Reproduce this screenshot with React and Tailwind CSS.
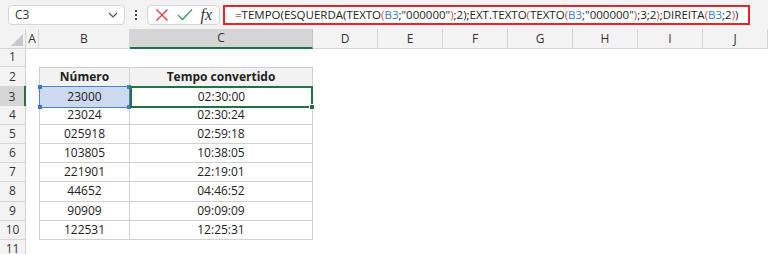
import React from 'react'

const COLS = ['A', 'B', 'C', 'D', 'E', 'F', 'G', 'H', 'I', 'J']

const DATA = [
  ['23000', '02:30:00'],
  ['23024', '02:30:24'],
  ['025918', '02:59:18'],
  ['103805', '10:38:05'],
  ['221901', '22:19:01'],
  ['44652', '04:46:52'],
  ['90909', '09:09:09'],
  ['122531', '12:25:31'],
]

const font = { fontFamily: '"Open Sans", "Noto Sans", sans-serif' }

function Formula() {
  const b = 'text-[#3a78c9]'
  const p = 'text-[#c0504d]'
  return (
    <span className="text-[11.5px] text-[#222] whitespace-nowrap">
      =TEMPO(ESQUERDA(TEXTO<span className={p}>(</span><span className={b}>B3</span>;"000000"<span className={p}>)</span>;2);EXT.TEXTO<span className={p}>(</span>TEXTO<span className={p}>(</span><span className={b}>B3</span>;"000000"<span className={p}>)</span>;3;2<span className={p}>)</span>;DIREITA<span className={p}>(</span><span className={b}>B3</span>;2<span className={p}>)</span>)
    </span>
  )
}

function TopBar() {
  return (
    <div className="h-[29px] bg-[#f3f3f3] flex items-center pl-[8px] gap-0">
      <div className="w-[117px] h-[20px] bg-white border border-[#d6d6d6] rounded-[4px] flex items-center justify-between pl-[6px] pr-[6px]">
        <span className="text-[12px] text-[#333]">C3</span>
        <svg width="10" height="6" viewBox="0 0 10 6"><path d="M1 1 L5 5 L9 1" fill="none" stroke="#555" strokeWidth="1.2" /></svg>
      </div>
      <div className="w-[22px] flex flex-col items-center gap-[2px]">
        <span className="w-[2px] h-[2px] bg-[#444]" />
        <span className="w-[2px] h-[2px] bg-[#444]" />
        <span className="w-[2px] h-[2px] bg-[#444]" />
      </div>
      <div className="w-[73px] h-[20px] bg-white border border-[#d6d6d6] rounded-[4px] flex items-center justify-around px-[3px]">
        <svg width="14" height="14" viewBox="0 0 14 14"><path d="M1.5 1.5 L12.5 12.5 M12.5 1.5 L1.5 12.5" stroke="#e5383b" strokeWidth="1.3" /></svg>
        <svg width="16" height="13" viewBox="0 0 16 13"><path d="M1 7 L5.5 11.5 L15 1.5" fill="none" stroke="#3f9a62" strokeWidth="1.3" /></svg>
        <span className="text-[16px] italic text-[#333] leading-none" style={{ fontFamily: '"Liberation Serif", serif' }}>fx</span>
      </div>
      <div className="ml-[3px] w-[527px] h-[20px] bg-white border-2 border-[#e8242a] flex items-center pl-[10px] overflow-hidden">
        <Formula />
      </div>
    </div>
  )
}

const grid = 'grid grid-cols-[26px_13px_91px_183px_65px_65px_65px_65px_65px_65px_65px]'

function HeaderRow() {
  return (
    <div className={`${grid} h-[19px] bg-[#f3f3f3]`}>
      <div className="relative border-r border-b border-[#d4d4d4] overflow-hidden">
        <svg className="absolute right-[2px] bottom-[2px]" width="12" height="12" viewBox="0 0 12 12"><path d="M12 0 L12 12 L0 12 Z" fill="#c8c8c8" /></svg>
      </div>
      {COLS.map((c) => (
        <div
          key={c}
          className={
            c === 'C'
              ? 'flex items-center justify-center text-[12px] text-[#333] bg-[#d5d5d5] border-b-2 border-[#217346] border-r border-r-[#c4c4c4]'
              : 'flex items-center justify-center text-[12px] text-[#333] border-r border-b border-[#d4d4d4]'
          }
        >
          {c}
        </div>
      ))}
    </div>
  )
}

function RowHead({ n }) {
  return (
    <div
      className={
        n === 3
          ? 'flex items-center justify-center text-[12px] text-[#333] bg-[#d5d5d5] border-r-2 border-[#217346] border-b border-b-[#c8c8c8]'
          : 'flex items-center justify-center text-[12px] text-[#333] bg-[#f3f3f3] border-r border-b border-[#d4d4d4]'
      }
    >
      {n}
    </div>
  )
}

function Row({ n, children }) {
  return (
    <div className={`${grid} h-[19.2px]`}>
      <RowHead n={n} />
      {children}
    </div>
  )
}

function Empty({ count }) {
  return Array.from({ length: count }).map((_, i) => <div key={i} />)
}

export default function App() {
  return (
    <div className="w-[768px] h-[254px] bg-white overflow-hidden" style={font}>
      <TopBar />
      <HeaderRow />
      <Row n={1}>
        <Empty count={10} />
      </Row>
      <Row n={2}>
        <div />
        <div className="flex items-center justify-center text-[12px] font-bold text-[#222] bg-[#f2f2f2] border border-[#d0d0d0]">Número</div>
        <div className="flex items-center justify-center text-[12px] font-bold text-[#222] bg-[#f2f2f2] border-t border-r border-b border-[#d0d0d0]">Tempo convertido</div>
        <Empty count={7} />
      </Row>
      {DATA.map(([num, time], i) => {
        const n = i + 3
        if (n === 3) {
          return (
            <Row key={n} n={n}>
              <div />
              <div className="relative flex items-center justify-center text-[12px] text-[#222] bg-[#cdd9ee] border border-[#4a86c8]">
                {num}
                <span className="absolute -left-[2px] -top-[2px] w-[4px] h-[4px] bg-[#3a78c9]" />
                <span className="absolute -right-[2px] -top-[2px] w-[4px] h-[4px] bg-[#3a78c9]" />
                <span className="absolute -left-[2px] -bottom-[2px] w-[4px] h-[4px] bg-[#3a78c9]" />
                <span className="absolute -right-[2px] -bottom-[2px] w-[4px] h-[4px] bg-[#3a78c9]" />
              </div>
              <div className="relative flex items-center justify-center text-[12px] text-[#222] border-2 border-[#217346]">
                {time}
                <span className="absolute -right-[4px] -bottom-[4px] w-[6px] h-[6px] bg-[#217346] border border-white" />
              </div>
              <Empty count={7} />
            </Row>
          )
        }
        return (
          <Row key={n} n={n}>
            <div />
            <div className="flex items-center justify-center text-[12px] text-[#222] border-l border-r border-b border-[#d0d0d0]">{num}</div>
            <div className="flex items-center justify-center text-[12px] text-[#222] border-r border-b border-[#d0d0d0]">{time}</div>
            <Empty count={7} />
          </Row>
        )
      })}
      <Row n={11}>
        <Empty count={10} />
      </Row>
    </div>
  )
}
